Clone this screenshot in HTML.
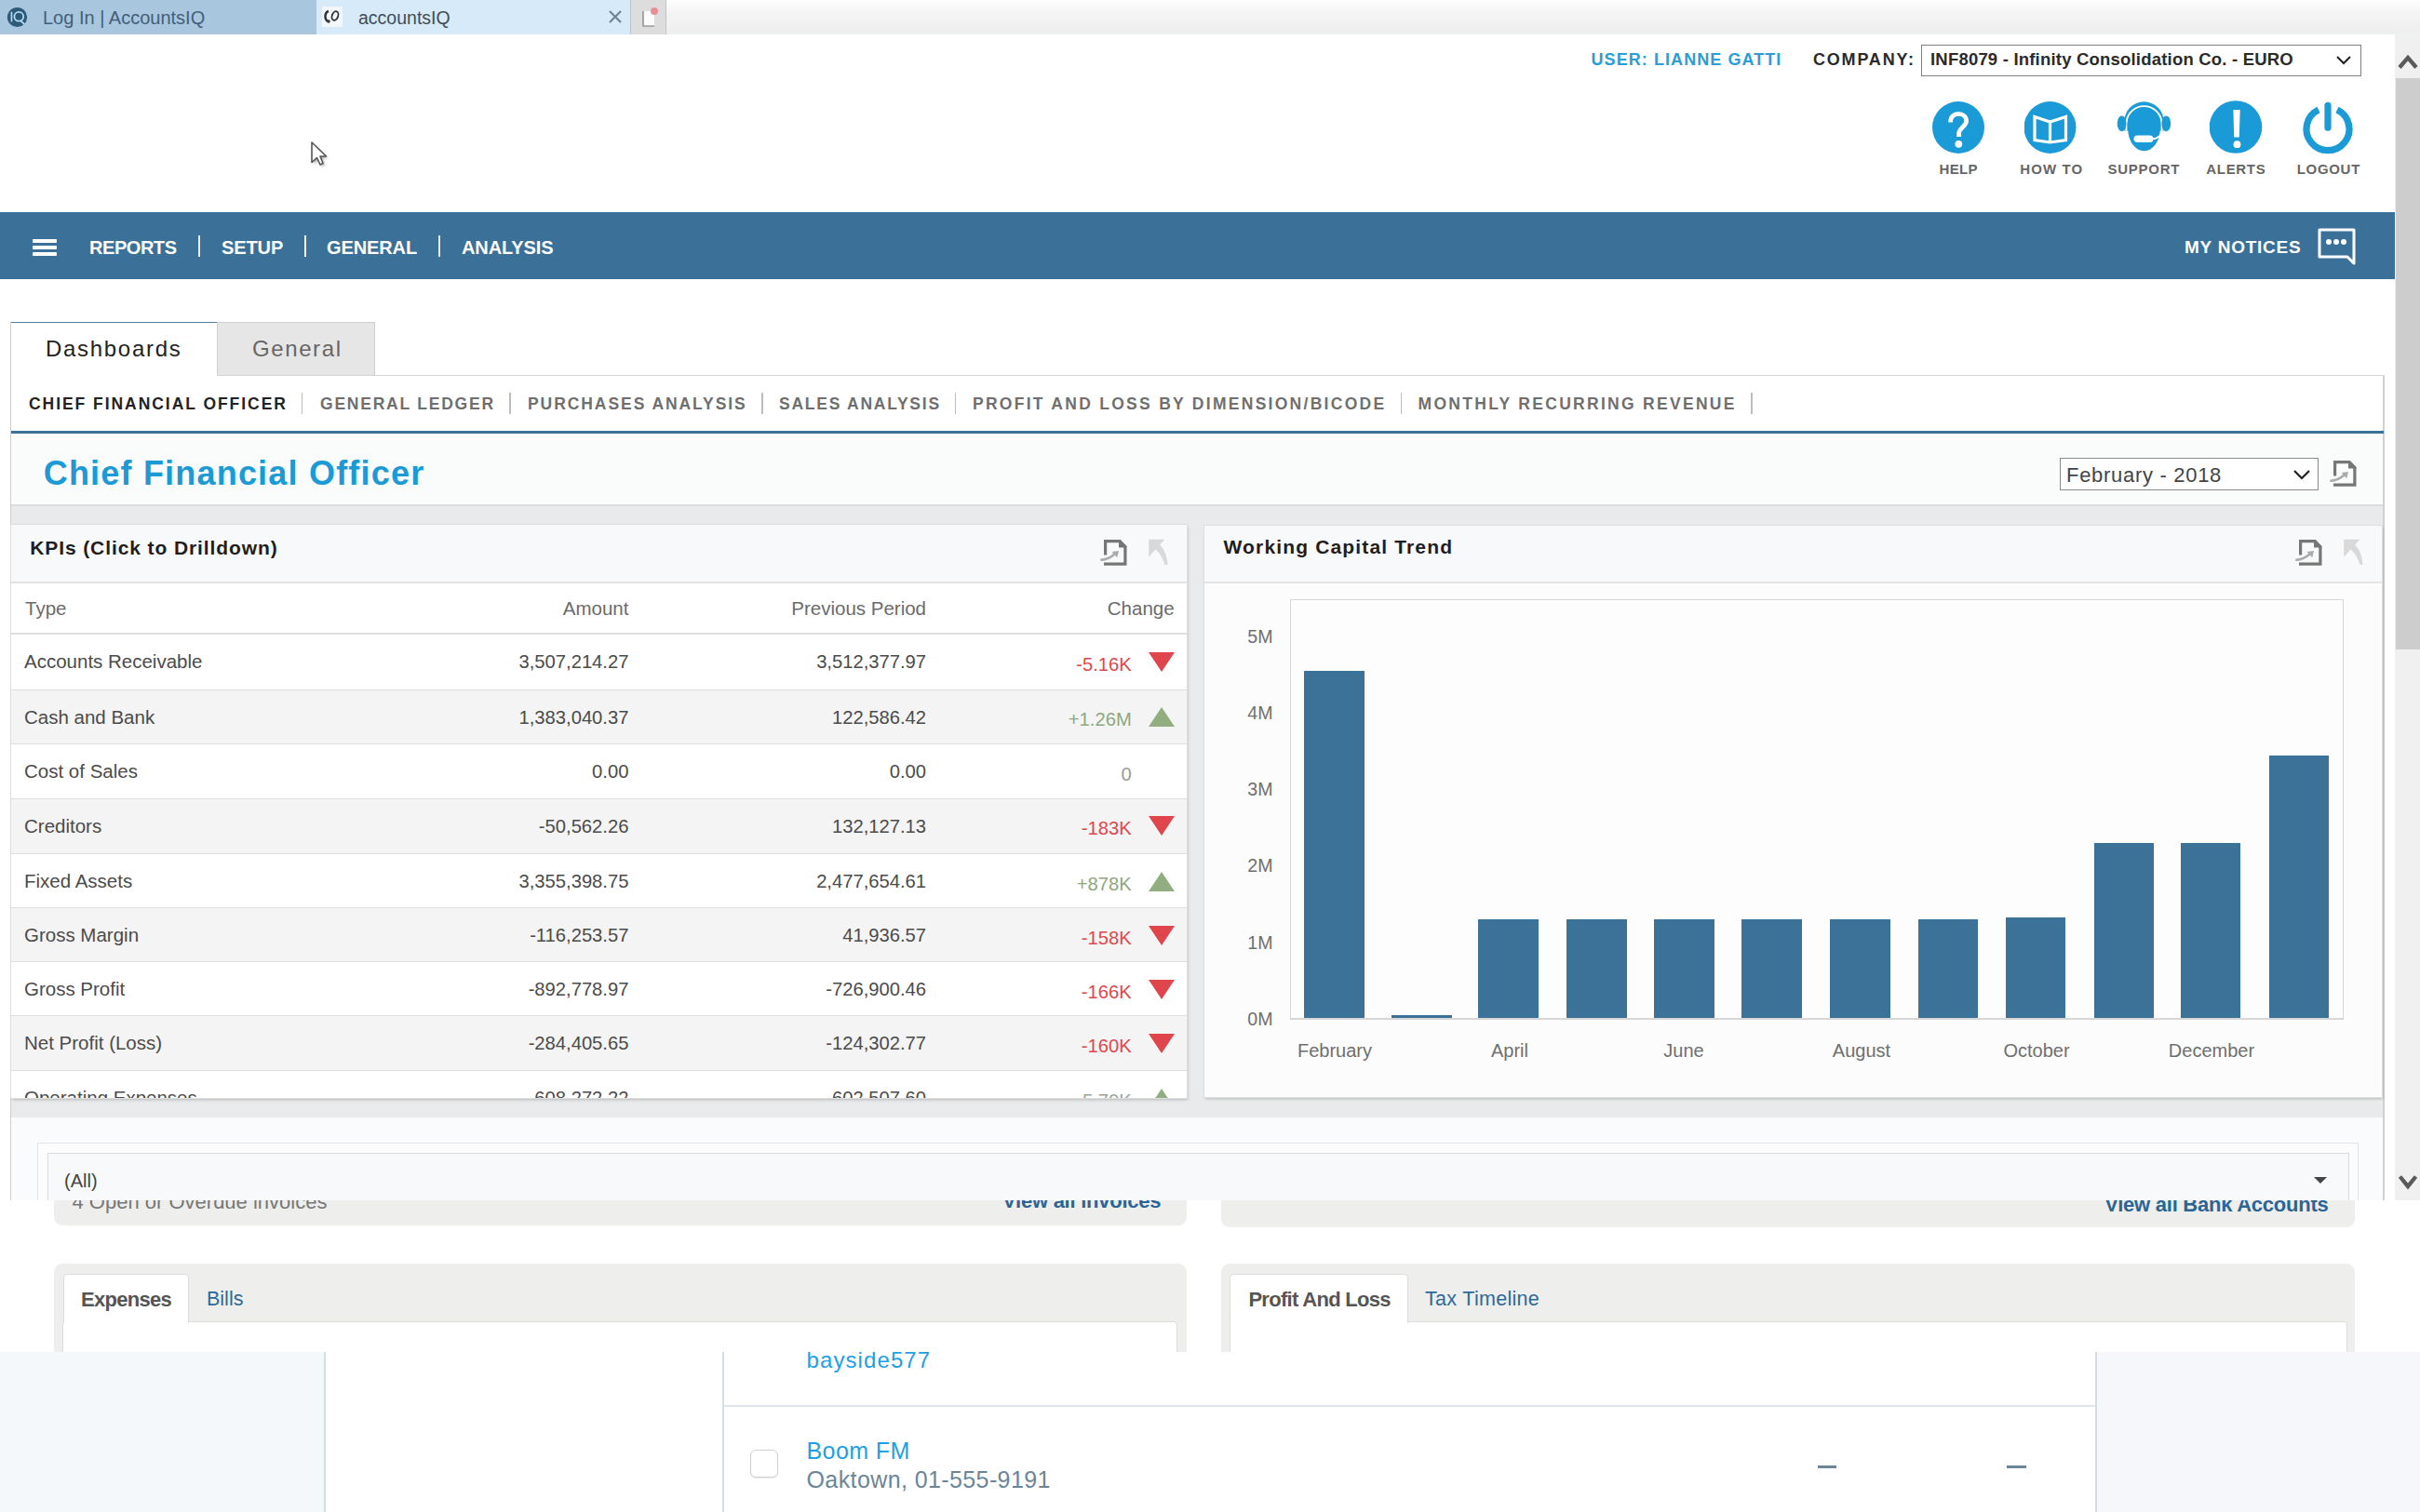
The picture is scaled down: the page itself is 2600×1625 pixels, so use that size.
<!DOCTYPE html>
<html><head><meta charset="utf-8"><title>accountsIQ</title>
<style>
html,body{margin:0;padding:0;width:2600px;height:1625px;overflow:hidden;background:#fff}
body{position:relative;font-family:"Liberation Sans", sans-serif;}
</style></head><body>
<div style="position:absolute;left:0;top:0;width:2600px;height:1290px;background:#fff;overflow:hidden">
<div style="position:absolute;left:0px;top:0px;width:2600px;height:37px;background:linear-gradient(to bottom,#fdfdfd 0px,#f9f9f9 8px,#f4f4f4 14px,#f2f2f2 24px,#efefef 30px,#eeefef 37px)"></div>
<div style="position:absolute;left:0px;top:0px;width:340px;height:37px;background:#a8c6de"></div>
<div style="position:absolute;left:340px;top:0px;width:337px;height:37px;background:#d7eaf9"></div>
<div style="position:absolute;left:677px;top:0px;width:39px;height:37px;background:#dddddd;border-left:1px solid #b5c4cf;border-right:1px solid #c4c4c4;box-sizing:border-box"></div>
<svg style="position:absolute;left:7px;top:6.5px" width="23" height="23" viewBox="0 0 23 23"><circle cx="11.5" cy="11.5" r="10.6" fill="#2c5a7a"/><rect x="4.6" y="5.8" width="1.7" height="10.6" fill="#b3d9ee"/><circle cx="13.3" cy="10.8" r="4.9" fill="none" stroke="#b3d9ee" stroke-width="1.8"/><path d="M15.2 15.4 L19.2 19" stroke="#b3d9ee" stroke-width="1.8"/></svg>
<div style="position:absolute;top:9.37px;font-size:20px;line-height:20px;color:#43607a;font-weight:normal;white-space:nowrap;left:46px;">Log In | AccountsIQ</div>
<div style="position:absolute;left:346px;top:7px;width:22px;height:22px;background:#f4f7fa"></div>
<svg style="position:absolute;left:347px;top:8px" width="20" height="20" viewBox="0 0 20 20"><path d="M6 4 C2 5 1 12 5 15" stroke="#333" stroke-width="2.4" fill="none"/><circle cx="6" cy="15" r="1.8" fill="#333"/><ellipse cx="13" cy="9" rx="3.2" ry="5" fill="none" stroke="#333" stroke-width="1.8" transform="rotate(20 13 9)"/></svg>
<div style="position:absolute;top:9.79px;font-size:19.5px;line-height:19.5px;color:#414d58;font-weight:normal;white-space:nowrap;left:385px;">accountsIQ</div>
<svg style="position:absolute;left:653px;top:10px" width="16" height="16" viewBox="0 0 16 16"><path d="M2 2 L14 14 M14 2 L2 14" stroke="#6d8596" stroke-width="2.2"/></svg>
<svg style="position:absolute;left:684px;top:3px" width="28" height="28" viewBox="0 0 28 28"><rect x="7" y="9" width="12" height="16" fill="#fbfbfb" stroke="#555" stroke-width="0" /><path d="M7 9 V25 H19" stroke="#777" stroke-width="1.2" fill="none"/><circle cx="19" cy="9" r="4" fill="#e88f96"/></svg>
<div style="position:absolute;top:55.36px;font-size:18px;line-height:18px;color:#2a9ed6;font-weight:bold;white-space:nowrap;letter-spacing:1.07px;left:1709.5px;">USER: LIANNE GATTI</div>
<div style="position:absolute;top:55.36px;font-size:18px;line-height:18px;color:#2b2b2b;font-weight:bold;white-space:nowrap;letter-spacing:1.8px;left:1948px;">COMPANY:</div>
<div style="position:absolute;left:2064px;top:48px;width:473px;height:34px;border:1.5px solid #808080;box-sizing:border-box;background:#fff"></div>
<div style="position:absolute;top:55.34px;font-size:18.5px;line-height:18.5px;color:#2b2b2b;font-weight:bold;white-space:nowrap;letter-spacing:0.2px;left:2074px;">INF8079 - Infinity Consolidation Co. - EURO</div>
<svg style="position:absolute;left:2509px;top:58px" width="18" height="14" viewBox="0 0 18 14"><path d="M2 3 L9 10 L16 3" stroke="#222" stroke-width="2" fill="none"/></svg>
<svg style="position:absolute;left:2076px;top:109px" width="56" height="56" viewBox="0 0 56 56"><circle cx="28" cy="28" r="28" fill="#1a9ad6"/><path d="M19.6 22.5 C19.6 16 23.5 13.4 28 13.4 C33 13.4 36.6 16.5 36.6 21 C36.6 26.5 29.8 28 28.6 33.5 V38" stroke="#fff" stroke-width="4.8" fill="none"/><circle cx="28.3" cy="45.8" r="3.9" fill="#fff"/></svg>
<svg style="position:absolute;left:2175px;top:109px" width="56" height="56" viewBox="0 0 56 56"><circle cx="27.5" cy="28" r="28" fill="#1a9ad6"/><path d="M11 16.5 L27.5 22 L44.5 16.5 V41.5 L27.5 44 L11 41.5 Z M27.5 22 V44" stroke="#fff" stroke-width="3.2" fill="none" stroke-linejoin="miter"/></svg>
<svg style="position:absolute;left:2268px;top:102px" width="70" height="70" viewBox="0 0 70 70"><path d="M14.3 38.5 V28.5 A21.2 21.2 0 0 1 56.7 28.5 V38.5 Z" fill="#1a9ad6"/><ellipse cx="35.5" cy="36.5" rx="17.3" ry="23.7" fill="#1a9ad6"/><path d="M16.4 38.5 V31.2 A19.1 19.1 0 0 1 54.6 31.2 V38.5" stroke="#fff" stroke-width="1.9" fill="none"/><ellipse cx="11.6" cy="30.8" rx="4.9" ry="8.4" fill="#1a9ad6"/><ellipse cx="59.3" cy="30.8" rx="4.9" ry="8.4" fill="#1a9ad6"/><rect x="24.5" y="43.5" width="21" height="7.6" rx="3.8" fill="#fff"/><path d="M44 47.5 C50 47 54 44 54.6 38.5" stroke="#fff" stroke-width="1.9" fill="none"/></svg>
<svg style="position:absolute;left:2374px;top:108px" width="57" height="57" viewBox="0 0 57 57"><circle cx="28" cy="28.5" r="28.3" fill="#1a9ad6"/><path d="M25.4 10 H32.7 L31.8 39.5 H26.2 Z" fill="#fff"/><circle cx="29.5" cy="47.2" r="3.9" fill="#fff"/></svg>
<svg style="position:absolute;left:2472px;top:107px" width="58" height="62" viewBox="0 0 58 62"><path d="M19 11 A23 23 0 1 0 39 11" stroke="#1a9ad6" stroke-width="7.2" fill="none"/><path d="M29 6.4 V30.2" stroke="#1a9ad6" stroke-width="7.2" stroke-linecap="round"/></svg>
<div style="position:absolute;top:174.30px;font-size:15px;line-height:15px;color:#666;font-weight:bold;white-space:nowrap;letter-spacing:0.3px;left:1504.15px;width:1200px;text-align:center;">HELP</div>
<div style="position:absolute;top:174.30px;font-size:15px;line-height:15px;color:#666;font-weight:bold;white-space:nowrap;letter-spacing:1.1px;left:1604.25px;width:1200px;text-align:center;">HOW TO</div>
<div style="position:absolute;top:174.30px;font-size:15px;line-height:15px;color:#666;font-weight:bold;white-space:nowrap;letter-spacing:0.75px;left:1703.38px;width:1200px;text-align:center;">SUPPORT</div>
<div style="position:absolute;top:174.30px;font-size:15px;line-height:15px;color:#666;font-weight:bold;white-space:nowrap;letter-spacing:0.7px;left:1802.35px;width:1200px;text-align:center;">ALERTS</div>
<div style="position:absolute;top:174.30px;font-size:15px;line-height:15px;color:#666;font-weight:bold;white-space:nowrap;letter-spacing:0.7px;left:1901.85px;width:1200px;text-align:center;">LOGOUT</div>
<div style="position:absolute;left:0px;top:228px;width:2573px;height:72px;background:#3b7199"></div>
<div style="position:absolute;left:35px;top:257px;width:26px;height:3.6px;background:#fff;border-radius:1px"></div>
<div style="position:absolute;left:35px;top:264px;width:26px;height:3.6px;background:#fff;border-radius:1px"></div>
<div style="position:absolute;left:35px;top:271px;width:26px;height:3.6px;background:#fff;border-radius:1px"></div>
<div style="position:absolute;top:255.77px;font-size:20px;line-height:20px;color:#ffffff;font-weight:bold;white-space:nowrap;letter-spacing:-0.45px;left:96px;">REPORTS</div>
<div style="position:absolute;left:213px;top:253px;width:2px;height:23px;background:#e8eef3"></div>
<div style="position:absolute;top:255.77px;font-size:20px;line-height:20px;color:#ffffff;font-weight:bold;white-space:nowrap;letter-spacing:-0.1px;left:238px;">SETUP</div>
<div style="position:absolute;left:326.5px;top:253px;width:2.5px;height:23px;background:#fff"></div>
<div style="position:absolute;top:255.77px;font-size:20px;line-height:20px;color:#ffffff;font-weight:bold;white-space:nowrap;letter-spacing:-0.1px;left:351px;">GENERAL</div>
<div style="position:absolute;left:471px;top:253px;width:2px;height:23px;background:#e8eef3"></div>
<div style="position:absolute;top:255.77px;font-size:20px;line-height:20px;color:#ffffff;font-weight:bold;white-space:nowrap;letter-spacing:-0.1px;left:496px;">ANALYSIS</div>
<div style="position:absolute;top:255.62px;font-size:19px;line-height:19px;color:#ffffff;font-weight:bold;white-space:nowrap;letter-spacing:0.75px;left:2347px;">MY NOTICES</div>
<svg style="position:absolute;left:2489px;top:243px" width="44" height="43" viewBox="0 0 44 43"><path d="M3 4 H40 V40 L33 33 H3 Z" stroke="#fff" stroke-width="3" fill="none" stroke-linejoin="round"/><circle cx="13" cy="17" r="3" fill="#fff"/><circle cx="21" cy="17" r="3" fill="#fff"/><circle cx="29" cy="17" r="3" fill="#fff"/></svg>
<div style="position:absolute;left:2573px;top:37px;width:27px;height:1253px;background:#f0f0f0"></div>
<div style="position:absolute;left:2574px;top:84px;width:26px;height:614px;background:#cdcdcd"></div>
<svg style="position:absolute;left:2574px;top:52px" width="26" height="26" viewBox="0 0 26 26"><path d="M4 20.5 L13 10 L22 20.5" stroke="#5a5a5a" stroke-width="4.3" fill="none"/></svg>
<svg style="position:absolute;left:2574px;top:1256px" width="26" height="26" viewBox="0 0 26 26"><path d="M4.5 8.5 L13 19 L21.5 8.5" stroke="#5a5a5a" stroke-width="4.3" fill="none"/></svg>
<svg style="position:absolute;left:330px;top:149px" width="30" height="36" viewBox="0 0 30 36"><defs><filter id="sh" x="-50%" y="-50%" width="200%" height="200%"><feGaussianBlur stdDeviation="1.5"/></filter></defs><path d="M7 6 V27.5 L12.5 22.5 L16 30 L19 28.5 L16 21 H22.5 Z" fill="#000" opacity="0.35" filter="url(#sh)"/><path d="M5 4 V25.5 L10.5 20.5 L14 28 L17 26.5 L14 19 H20.5 Z" fill="#fff" stroke="#555" stroke-width="1.6" stroke-linejoin="round"/></svg>
<div style="position:absolute;left:2560px;top:403px;width:2px;height:887px;background:#d0d0d0"></div>
<div style="position:absolute;left:11px;top:346px;width:222px;height:58px;background:#fff;border-top:1.5px solid #56809e;box-sizing:border-box"></div>
<div style="position:absolute;left:233px;top:346px;width:170px;height:58px;background:#e6e6e6;border:1px solid #cfcfcf;border-bottom:none;box-sizing:border-box"></div>
<div style="position:absolute;left:233px;top:403px;width:2328px;height:1px;background:#d5d5d5"></div>
<div style="position:absolute;left:11px;top:346px;width:1.2px;height:944px;background:#cfcfcf"></div>
<div style="position:absolute;top:363.48px;font-size:24px;line-height:24px;color:#222;font-weight:normal;white-space:nowrap;letter-spacing:1.7px;left:49px;">Dashboards</div>
<div style="position:absolute;top:363.48px;font-size:24px;line-height:24px;color:#666;font-weight:normal;white-space:nowrap;letter-spacing:1.6px;left:271px;">General</div>
<div style="position:absolute;top:426.29px;font-size:17.5px;line-height:17.5px;color:#222;font-weight:bold;white-space:nowrap;letter-spacing:1.95px;left:31px;">CHIEF FINANCIAL OFFICER</div>
<div style="position:absolute;top:426.29px;font-size:17.5px;line-height:17.5px;color:#6f6f6f;font-weight:bold;white-space:nowrap;letter-spacing:1.77px;left:344px;">GENERAL LEDGER</div>
<div style="position:absolute;top:426.29px;font-size:17.5px;line-height:17.5px;color:#6f6f6f;font-weight:bold;white-space:nowrap;letter-spacing:1.93px;left:567px;">PURCHASES ANALYSIS</div>
<div style="position:absolute;top:426.29px;font-size:17.5px;line-height:17.5px;color:#6f6f6f;font-weight:bold;white-space:nowrap;letter-spacing:1.74px;left:837px;">SALES ANALYSIS</div>
<div style="position:absolute;top:426.29px;font-size:17.5px;line-height:17.5px;color:#6f6f6f;font-weight:bold;white-space:nowrap;letter-spacing:2.28px;left:1045px;">PROFIT AND LOSS BY DIMENSION/BICODE</div>
<div style="position:absolute;top:426.29px;font-size:17.5px;line-height:17.5px;color:#6f6f6f;font-weight:bold;white-space:nowrap;letter-spacing:2.29px;left:1523.6px;">MONTHLY RECURRING REVENUE</div>
<div style="position:absolute;left:323.5px;top:422px;width:1.6px;height:23px;background:#bdbdbd"></div>
<div style="position:absolute;left:547px;top:422px;width:1.6px;height:23px;background:#bdbdbd"></div>
<div style="position:absolute;left:818px;top:422px;width:1.6px;height:23px;background:#bdbdbd"></div>
<div style="position:absolute;left:1025.5px;top:422px;width:1.6px;height:23px;background:#bdbdbd"></div>
<div style="position:absolute;left:1504.5px;top:422px;width:1.6px;height:23px;background:#bdbdbd"></div>
<div style="position:absolute;left:1881px;top:422px;width:1.6px;height:23px;background:#bdbdbd"></div>
<div style="position:absolute;left:12px;top:463px;width:2549px;height:3.2px;background:#3e6f96"></div>
<div style="position:absolute;left:12px;top:466px;width:2548px;height:76px;background:#fafbfb"></div>
<div style="position:absolute;top:490.53px;font-size:36px;line-height:36px;color:#1b9ad6;font-weight:bold;white-space:nowrap;letter-spacing:1.2px;left:46.7px;">Chief Financial Officer</div>
<div style="position:absolute;left:2213px;top:492px;width:278px;height:35px;border:1.4px solid #8a8a8a;background:#fff;box-sizing:border-box"></div>
<div style="position:absolute;top:499.88px;font-size:22px;line-height:22px;color:#444;font-weight:normal;white-space:nowrap;letter-spacing:0.7px;left:2220px;">February - 2018</div>
<svg style="position:absolute;left:2463px;top:503px" width="20" height="15" viewBox="0 0 20 15"><path d="M2 3 L10 11 L18 3" stroke="#222" stroke-width="2.2" fill="none"/></svg>
<svg style="position:absolute;left:2502.2px;top:493.3px;overflow:visible" width="32" height="32" viewBox="-5 -2 32 32"><path d="M1.6 16.6 V1.6 H17 L22.9 7.9 V26.2 H0" stroke="#767676" stroke-width="3.2" fill="none" stroke-linejoin="miter"/><path d="M16 0 H17.6 L24.5 7 V8.4 H16 Z" fill="#767676"/><path d="M-3.7 21.8 C2 21.8 7 19.5 11.5 15.5" stroke="#ababab" stroke-width="2.6" fill="none"/><path d="M8.6 13 L16 12 L14.2 19.2 Z" fill="#ababab"/></svg>
<div style="position:absolute;left:12px;top:542px;width:2548px;height:748px;background:#e9eaeb"></div>
<div style="position:absolute;left:12px;top:542px;width:2548px;height:2px;background:#dcdcdc"></div>
<div style="position:absolute;left:12px;top:564px;width:1263px;height:616px;background:#fff;box-shadow:0 0 0 1px #dedede, 1px 2px 3px rgba(0,0,0,0.22)"></div>
<div style="position:absolute;left:12px;top:564px;width:1263px;height:61px;background:#f8f9fa"></div>
<div style="position:absolute;left:12px;top:625px;width:1263px;height:1.5px;background:#e2e2e2"></div>
<div style="position:absolute;top:578.02px;font-size:21px;line-height:21px;color:#1e1e1e;font-weight:bold;white-space:nowrap;letter-spacing:0.9px;left:32.2px;">KPIs (Click to Drilldown)</div>
<svg style="position:absolute;left:1181px;top:577.6px;overflow:visible" width="32" height="32" viewBox="-5 -2 32 32"><path d="M1.6 16.6 V1.6 H17 L22.9 7.9 V26.2 H0" stroke="#767676" stroke-width="3.2" fill="none" stroke-linejoin="miter"/><path d="M16 0 H17.6 L24.5 7 V8.4 H16 Z" fill="#767676"/><path d="M-3.7 21.8 C2 21.8 7 19.5 11.5 15.5" stroke="#ababab" stroke-width="2.6" fill="none"/><path d="M8.6 13 L16 12 L14.2 19.2 Z" fill="#ababab"/></svg>
<svg style="position:absolute;left:1225px;top:572px" width="32" height="38" viewBox="0 0 32 38"><path d="M9.2 7.8 H26.4 L21 13.5 C26 18 29 26 29.5 35 L26.5 35 C24 28 21 22 16.5 18.6 L9.2 26.7 Z" fill="#d9d9d9"/></svg>
<div style="position:absolute;top:644.25px;font-size:20.5px;line-height:20.5px;color:#6b6b6b;font-weight:normal;white-space:nowrap;left:27px;">Type</div>
<div style="position:absolute;top:644.25px;font-size:20.5px;line-height:20.5px;color:#6b6b6b;font-weight:normal;white-space:nowrap;right:1924.60px;text-align:right;">Amount</div>
<div style="position:absolute;top:644.25px;font-size:20.5px;line-height:20.5px;color:#6b6b6b;font-weight:normal;white-space:nowrap;right:1605.00px;text-align:right;">Previous Period</div>
<div style="position:absolute;top:644.25px;font-size:20.5px;line-height:20.5px;color:#6b6b6b;font-weight:normal;white-space:nowrap;right:1338.40px;text-align:right;">Change</div>
<div style="position:absolute;left:12px;top:680px;width:1263px;height:1.5px;background:#dedede"></div>
<div style="position:absolute;left:12px;top:681px;width:1263px;height:499px;overflow:hidden">
<div style="position:absolute;left:0;top:0px;width:1263px;height:59.5px;background:#ffffff;border-top:1.5px solid #dedede;box-sizing:border-box"></div>
<div style="position:absolute;left:14px;top:20.15px;font-size:20.5px;line-height:20.5px;color:#4b4b4b;white-space:nowrap">Accounts Receivable</div>
<div style="position:absolute;right:599.60px;top:20.40px;font-size:20.2px;line-height:20.2px;color:#4b4b4b;white-space:nowrap;text-align:right">3,507,214.27</div>
<div style="position:absolute;right:280.00px;top:20.40px;font-size:20.2px;line-height:20.2px;color:#4b4b4b;white-space:nowrap;text-align:right">3,512,377.97</div>
<div style="position:absolute;right:59.30px;top:22.90px;font-size:20.2px;line-height:20.2px;color:#e0474c;white-space:nowrap;text-align:right">-5.16K</div>
<svg style="position:absolute;left:1221px;top:19.5px" width="30" height="22" viewBox="0 0 30 22"><path d="M1 0 H29 L15 21 Z" fill="#e0454b"/></svg>
<div style="position:absolute;left:0;top:59.5px;width:1263px;height:58.5px;background:#f4f4f4;border-top:1.5px solid #dedede;box-sizing:border-box"></div>
<div style="position:absolute;left:14px;top:79.65px;font-size:20.5px;line-height:20.5px;color:#4b4b4b;white-space:nowrap">Cash and Bank</div>
<div style="position:absolute;right:599.60px;top:79.90px;font-size:20.2px;line-height:20.2px;color:#4b4b4b;white-space:nowrap;text-align:right">1,383,040.37</div>
<div style="position:absolute;right:280.00px;top:79.90px;font-size:20.2px;line-height:20.2px;color:#4b4b4b;white-space:nowrap;text-align:right">122,586.42</div>
<div style="position:absolute;right:59.30px;top:82.40px;font-size:20.2px;line-height:20.2px;color:#8fa77e;white-space:nowrap;text-align:right">+1.26M</div>
<svg style="position:absolute;left:1221px;top:79.0px" width="30" height="22" viewBox="0 0 30 22"><path d="M1 21 H29 L15 0 Z" fill="#92ad7f"/></svg>
<div style="position:absolute;left:0;top:118px;width:1263px;height:58.5px;background:#ffffff;border-top:1.5px solid #dedede;box-sizing:border-box"></div>
<div style="position:absolute;left:14px;top:138.15px;font-size:20.5px;line-height:20.5px;color:#4b4b4b;white-space:nowrap">Cost of Sales</div>
<div style="position:absolute;right:599.60px;top:138.40px;font-size:20.2px;line-height:20.2px;color:#4b4b4b;white-space:nowrap;text-align:right">0.00</div>
<div style="position:absolute;right:280.00px;top:138.40px;font-size:20.2px;line-height:20.2px;color:#4b4b4b;white-space:nowrap;text-align:right">0.00</div>
<div style="position:absolute;right:59.30px;top:140.90px;font-size:20.2px;line-height:20.2px;color:#9a9a9a;white-space:nowrap;text-align:right">0</div>
<div style="position:absolute;left:0;top:176.5px;width:1263px;height:59.5px;background:#f4f4f4;border-top:1.5px solid #dedede;box-sizing:border-box"></div>
<div style="position:absolute;left:14px;top:196.65px;font-size:20.5px;line-height:20.5px;color:#4b4b4b;white-space:nowrap">Creditors</div>
<div style="position:absolute;right:599.60px;top:196.90px;font-size:20.2px;line-height:20.2px;color:#4b4b4b;white-space:nowrap;text-align:right">-50,562.26</div>
<div style="position:absolute;right:280.00px;top:196.90px;font-size:20.2px;line-height:20.2px;color:#4b4b4b;white-space:nowrap;text-align:right">132,127.13</div>
<div style="position:absolute;right:59.30px;top:199.40px;font-size:20.2px;line-height:20.2px;color:#e0474c;white-space:nowrap;text-align:right">-183K</div>
<svg style="position:absolute;left:1221px;top:196.0px" width="30" height="22" viewBox="0 0 30 22"><path d="M1 0 H29 L15 21 Z" fill="#e0454b"/></svg>
<div style="position:absolute;left:0;top:236px;width:1263px;height:58px;background:#ffffff;border-top:1.5px solid #dedede;box-sizing:border-box"></div>
<div style="position:absolute;left:14px;top:256.15px;font-size:20.5px;line-height:20.5px;color:#4b4b4b;white-space:nowrap">Fixed Assets</div>
<div style="position:absolute;right:599.60px;top:256.40px;font-size:20.2px;line-height:20.2px;color:#4b4b4b;white-space:nowrap;text-align:right">3,355,398.75</div>
<div style="position:absolute;right:280.00px;top:256.40px;font-size:20.2px;line-height:20.2px;color:#4b4b4b;white-space:nowrap;text-align:right">2,477,654.61</div>
<div style="position:absolute;right:59.30px;top:258.90px;font-size:20.2px;line-height:20.2px;color:#8fa77e;white-space:nowrap;text-align:right">+878K</div>
<svg style="position:absolute;left:1221px;top:255.5px" width="30" height="22" viewBox="0 0 30 22"><path d="M1 21 H29 L15 0 Z" fill="#92ad7f"/></svg>
<div style="position:absolute;left:0;top:294px;width:1263px;height:58px;background:#f4f4f4;border-top:1.5px solid #dedede;box-sizing:border-box"></div>
<div style="position:absolute;left:14px;top:314.15px;font-size:20.5px;line-height:20.5px;color:#4b4b4b;white-space:nowrap">Gross Margin</div>
<div style="position:absolute;right:599.60px;top:314.40px;font-size:20.2px;line-height:20.2px;color:#4b4b4b;white-space:nowrap;text-align:right">-116,253.57</div>
<div style="position:absolute;right:280.00px;top:314.40px;font-size:20.2px;line-height:20.2px;color:#4b4b4b;white-space:nowrap;text-align:right">41,936.57</div>
<div style="position:absolute;right:59.30px;top:316.90px;font-size:20.2px;line-height:20.2px;color:#e0474c;white-space:nowrap;text-align:right">-158K</div>
<svg style="position:absolute;left:1221px;top:313.5px" width="30" height="22" viewBox="0 0 30 22"><path d="M1 0 H29 L15 21 Z" fill="#e0454b"/></svg>
<div style="position:absolute;left:0;top:352px;width:1263px;height:58px;background:#ffffff;border-top:1.5px solid #dedede;box-sizing:border-box"></div>
<div style="position:absolute;left:14px;top:372.15px;font-size:20.5px;line-height:20.5px;color:#4b4b4b;white-space:nowrap">Gross Profit</div>
<div style="position:absolute;right:599.60px;top:372.40px;font-size:20.2px;line-height:20.2px;color:#4b4b4b;white-space:nowrap;text-align:right">-892,778.97</div>
<div style="position:absolute;right:280.00px;top:372.40px;font-size:20.2px;line-height:20.2px;color:#4b4b4b;white-space:nowrap;text-align:right">-726,900.46</div>
<div style="position:absolute;right:59.30px;top:374.90px;font-size:20.2px;line-height:20.2px;color:#e0474c;white-space:nowrap;text-align:right">-166K</div>
<svg style="position:absolute;left:1221px;top:371.5px" width="30" height="22" viewBox="0 0 30 22"><path d="M1 0 H29 L15 21 Z" fill="#e0454b"/></svg>
<div style="position:absolute;left:0;top:410px;width:1263px;height:59px;background:#f4f4f4;border-top:1.5px solid #dedede;box-sizing:border-box"></div>
<div style="position:absolute;left:14px;top:430.15px;font-size:20.5px;line-height:20.5px;color:#4b4b4b;white-space:nowrap">Net Profit (Loss)</div>
<div style="position:absolute;right:599.60px;top:430.40px;font-size:20.2px;line-height:20.2px;color:#4b4b4b;white-space:nowrap;text-align:right">-284,405.65</div>
<div style="position:absolute;right:280.00px;top:430.40px;font-size:20.2px;line-height:20.2px;color:#4b4b4b;white-space:nowrap;text-align:right">-124,302.77</div>
<div style="position:absolute;right:59.30px;top:432.90px;font-size:20.2px;line-height:20.2px;color:#e0474c;white-space:nowrap;text-align:right">-160K</div>
<svg style="position:absolute;left:1221px;top:429.5px" width="30" height="22" viewBox="0 0 30 22"><path d="M1 0 H29 L15 21 Z" fill="#e0454b"/></svg>
<div style="position:absolute;left:0;top:469px;width:1263px;height:59px;background:#ffffff;border-top:1.5px solid #dedede;box-sizing:border-box"></div>
<div style="position:absolute;left:14px;top:489.15px;font-size:20.5px;line-height:20.5px;color:#4b4b4b;white-space:nowrap">Operating Expenses</div>
<div style="position:absolute;right:599.60px;top:489.40px;font-size:20.2px;line-height:20.2px;color:#4b4b4b;white-space:nowrap;text-align:right">608,272.22</div>
<div style="position:absolute;right:280.00px;top:489.40px;font-size:20.2px;line-height:20.2px;color:#4b4b4b;white-space:nowrap;text-align:right">602,507.60</div>
<div style="position:absolute;right:59.30px;top:491.90px;font-size:20.2px;line-height:20.2px;color:#9aa39a;white-space:nowrap;text-align:right">5.70K</div>
<svg style="position:absolute;left:1221px;top:488.5px" width="30" height="22" viewBox="0 0 30 22"><path d="M1 21 H29 L15 0 Z" fill="#92ad7f"/></svg>
</div>
<div style="position:absolute;left:1294px;top:565px;width:1265px;height:614px;background:#fcfcfc;box-shadow:0 0 0 1px #dedede, 1px 2px 3px rgba(0,0,0,0.22)"></div>
<div style="position:absolute;left:1294px;top:565px;width:1265px;height:60px;background:#f8f9fa"></div>
<div style="position:absolute;left:1294px;top:625px;width:1265px;height:1.5px;background:#e4e4e4"></div>
<div style="position:absolute;top:577.42px;font-size:21px;line-height:21px;color:#1e1e1e;font-weight:bold;white-space:nowrap;letter-spacing:1.15px;left:1314.5px;">Working Capital Trend</div>
<svg style="position:absolute;left:2464.5px;top:577.6px;overflow:visible" width="32" height="32" viewBox="-5 -2 32 32"><path d="M1.6 16.6 V1.6 H17 L22.9 7.9 V26.2 H0" stroke="#767676" stroke-width="3.2" fill="none" stroke-linejoin="miter"/><path d="M16 0 H17.6 L24.5 7 V8.4 H16 Z" fill="#767676"/><path d="M-3.7 21.8 C2 21.8 7 19.5 11.5 15.5" stroke="#ababab" stroke-width="2.6" fill="none"/><path d="M8.6 13 L16 12 L14.2 19.2 Z" fill="#ababab"/></svg>
<svg style="position:absolute;left:2508.5px;top:572px" width="32" height="38" viewBox="0 0 32 38"><path d="M9.2 7.8 H26.4 L21 13.5 C26 18 29 26 29.5 35 L26.5 35 C24 28 21 22 16.5 18.6 L9.2 26.7 Z" fill="#d9d9d9"/></svg>
<div style="position:absolute;left:1386px;top:644px;width:1132px;height:452px;border:1.6px solid #d6d6d6;border-right-width:1.2px;box-sizing:border-box;background:#fdfdfd"></div>
<div style="position:absolute;top:674.71px;font-size:19.6px;line-height:19.6px;color:#707070;font-weight:normal;white-space:nowrap;right:1232.50px;text-align:right;">5M</div>
<div style="position:absolute;top:756.91px;font-size:19.6px;line-height:19.6px;color:#707070;font-weight:normal;white-space:nowrap;right:1232.50px;text-align:right;">4M</div>
<div style="position:absolute;top:839.11px;font-size:19.6px;line-height:19.6px;color:#707070;font-weight:normal;white-space:nowrap;right:1232.50px;text-align:right;">3M</div>
<div style="position:absolute;top:921.31px;font-size:19.6px;line-height:19.6px;color:#707070;font-weight:normal;white-space:nowrap;right:1232.50px;text-align:right;">2M</div>
<div style="position:absolute;top:1003.51px;font-size:19.6px;line-height:19.6px;color:#707070;font-weight:normal;white-space:nowrap;right:1232.50px;text-align:right;">1M</div>
<div style="position:absolute;top:1085.71px;font-size:19.6px;line-height:19.6px;color:#707070;font-weight:normal;white-space:nowrap;right:1232.50px;text-align:right;">0M</div>
<div style="position:absolute;left:1401px;top:720.5px;width:64.5px;height:374.5px;background:#3c7198"></div>
<div style="position:absolute;left:1495px;top:1091px;width:64.5px;height:4px;background:#3c7198"></div>
<div style="position:absolute;left:1588px;top:988px;width:64.5px;height:107px;background:#3c7198"></div>
<div style="position:absolute;left:1683px;top:988px;width:64.5px;height:107px;background:#3c7198"></div>
<div style="position:absolute;left:1777px;top:988px;width:64.5px;height:107px;background:#3c7198"></div>
<div style="position:absolute;left:1871px;top:988px;width:64.5px;height:107px;background:#3c7198"></div>
<div style="position:absolute;left:1966px;top:988px;width:64.5px;height:107px;background:#3c7198"></div>
<div style="position:absolute;left:2060.5px;top:988px;width:64.5px;height:107px;background:#3c7198"></div>
<div style="position:absolute;left:2154.5px;top:986.2px;width:64.5px;height:108.79999999999995px;background:#3c7198"></div>
<div style="position:absolute;left:2249.5px;top:906px;width:64.5px;height:189px;background:#3c7198"></div>
<div style="position:absolute;left:2342.5px;top:906px;width:64.5px;height:189px;background:#3c7198"></div>
<div style="position:absolute;left:2437.5px;top:812px;width:64.5px;height:283px;background:#3c7198"></div>
<div style="position:absolute;left:1387px;top:1094px;width:1130px;height:2px;background:#d6d6d6"></div>
<div style="position:absolute;top:1118.57px;font-size:20px;line-height:20px;color:#6f6f6f;font-weight:normal;white-space:nowrap;left:834.00px;width:1200px;text-align:center;">February</div>
<div style="position:absolute;top:1118.57px;font-size:20px;line-height:20px;color:#6f6f6f;font-weight:normal;white-space:nowrap;left:1022.00px;width:1200px;text-align:center;">April</div>
<div style="position:absolute;top:1118.57px;font-size:20px;line-height:20px;color:#6f6f6f;font-weight:normal;white-space:nowrap;left:1209.00px;width:1200px;text-align:center;">June</div>
<div style="position:absolute;top:1118.57px;font-size:20px;line-height:20px;color:#6f6f6f;font-weight:normal;white-space:nowrap;left:1400.00px;width:1200px;text-align:center;">August</div>
<div style="position:absolute;top:1118.57px;font-size:20px;line-height:20px;color:#6f6f6f;font-weight:normal;white-space:nowrap;left:1588.00px;width:1200px;text-align:center;">October</div>
<div style="position:absolute;top:1118.57px;font-size:20px;line-height:20px;color:#6f6f6f;font-weight:normal;white-space:nowrap;left:1776.00px;width:1200px;text-align:center;">December</div>
<div style="position:absolute;left:12px;top:1201px;width:2548px;height:89px;background:#fafbfc"></div>
<div style="position:absolute;left:40px;top:1228px;width:2494px;height:62px;border:1px solid #e3e3e3;border-bottom:none;background:#fcfcfd;box-sizing:border-box"></div>
<div style="position:absolute;left:50.5px;top:1239px;width:2473.5px;height:51px;border:1.4px solid #dadada;border-bottom:none;background:#f8f9fb;box-sizing:border-box"></div>
<div style="position:absolute;top:1259.07px;font-size:20px;line-height:20px;color:#444;font-weight:normal;white-space:nowrap;left:69px;">(All)</div>
<svg style="position:absolute;left:2484.5px;top:1263.5px" width="16" height="10" viewBox="0 0 16 10"><path d="M1 1 H15 L8 8 Z" fill="#444"/></svg>
</div>
<div style="position:absolute;left:0;top:1290px;width:2600px;height:163px;background:#fff;overflow:hidden">
<div style="position:absolute;left:58px;top:-40px;width:1217px;height:67px;background:#eeeeec;border-radius:0 0 9px 9px"></div>
<div style="position:absolute;left:1312px;top:-40px;width:1218px;height:69px;background:#eeeeec;border-radius:0 0 9px 9px"></div>
<div style="position:absolute;top:-8.62px;font-size:22px;line-height:22px;color:#777777;font-weight:normal;white-space:nowrap;left:77.5px;">4 Open or Overdue invoices</div>
<div style="position:absolute;top:-9.62px;font-size:22px;line-height:22px;color:#2b6496;font-weight:bold;white-space:nowrap;letter-spacing:-0.25px;right:1352.75px;">View all invoices</div>
<div style="position:absolute;top:-5.62px;font-size:22px;line-height:22px;color:#2b6496;font-weight:bold;white-space:nowrap;letter-spacing:-0.25px;right:98.55px;">View all Bank Accounts</div>
<div style="position:absolute;left:58px;top:67.5px;width:1217px;height:140px;background:#eeeeec;border-radius:9px 9px 0 0"></div>
<div style="position:absolute;left:1312px;top:67.5px;width:1218px;height:140px;background:#eeeeec;border-radius:9px 9px 0 0"></div>
<div style="position:absolute;left:67px;top:129.5px;width:1198px;height:60px;background:#fff;border:1.5px solid #dcdcdc;border-radius:4px;box-sizing:border-box"></div>
<div style="position:absolute;left:1321px;top:129.5px;width:1201px;height:60px;background:#fff;border:1.5px solid #dcdcdc;border-radius:4px;box-sizing:border-box"></div>
<div style="position:absolute;left:68px;top:79px;width:135px;height:53px;background:#fff;border:1.5px solid #dcdcdc;border-bottom:none;border-radius:5px 5px 0 0;box-sizing:border-box"></div>
<div style="position:absolute;left:1321px;top:79px;width:192px;height:53px;background:#fff;border:1.5px solid #dcdcdc;border-bottom:none;border-radius:5px 5px 0 0;box-sizing:border-box"></div>
<div style="position:absolute;top:95.88px;font-size:22px;line-height:22px;color:#555555;font-weight:bold;white-space:nowrap;letter-spacing:-0.7px;left:87px;">Expenses</div>
<div style="position:absolute;top:95.80px;font-size:21.5px;line-height:21.5px;color:#2d6a9a;font-weight:normal;white-space:nowrap;left:222px;">Bills</div>
<div style="position:absolute;top:95.88px;font-size:22px;line-height:22px;color:#555555;font-weight:bold;white-space:nowrap;letter-spacing:-0.7px;left:1341.4px;">Profit And Loss</div>
<div style="position:absolute;top:95.80px;font-size:21.5px;line-height:21.5px;color:#2d6a9a;font-weight:normal;white-space:nowrap;letter-spacing:0.3px;left:1531px;">Tax Timeline</div>
</div>
<div style="position:absolute;left:0;top:1453px;width:2600px;height:172px;background:#fff;overflow:hidden">
<div style="position:absolute;left:0px;top:0px;width:348px;height:172px;background:#f5f8fa"></div>
<div style="position:absolute;left:348px;top:0px;width:1.5px;height:172px;background:#d3dde4"></div>
<div style="position:absolute;left:776px;top:0px;width:1.5px;height:172px;background:#d3dde4"></div>
<div style="position:absolute;left:777px;top:57px;width:1475px;height:1.5px;background:#dde5ea"></div>
<div style="position:absolute;left:2251px;top:0px;width:1.5px;height:172px;background:#d3dde4"></div>
<div style="position:absolute;left:2252.5px;top:0px;width:348px;height:172px;background:#f5f7fa"></div>
<div style="position:absolute;left:866.5px;top:-2.72px;font-size:24px;line-height:24px;color:#1d9fe6;font-weight:normal;white-space:nowrap;letter-spacing:1.1px;">bayside577</div>
<div style="position:absolute;left:806px;top:105px;width:29.5px;height:29.5px;border:1.5px solid #cfcfcf;border-radius:6px;box-sizing:border-box;background:#fff;box-shadow:0 1px 1px rgba(0,0,0,0.08)"></div>
<div style="position:absolute;left:866.5px;top:93.84px;font-size:25px;line-height:25px;color:#1d9fe6;font-weight:normal;white-space:nowrap;letter-spacing:0.4px;">Boom FM</div>
<div style="position:absolute;left:866.5px;top:124.54px;font-size:25px;line-height:25px;color:#6b8598;font-weight:normal;white-space:nowrap;letter-spacing:0.4px;">Oaktown, 01-555-9191</div>
<div style="position:absolute;left:1953px;top:122px;width:20px;height:2.5px;background:#6b8598"></div>
<div style="position:absolute;left:2156px;top:122px;width:20.5px;height:2.5px;background:#6b8598"></div>
</div>
</body></html>
